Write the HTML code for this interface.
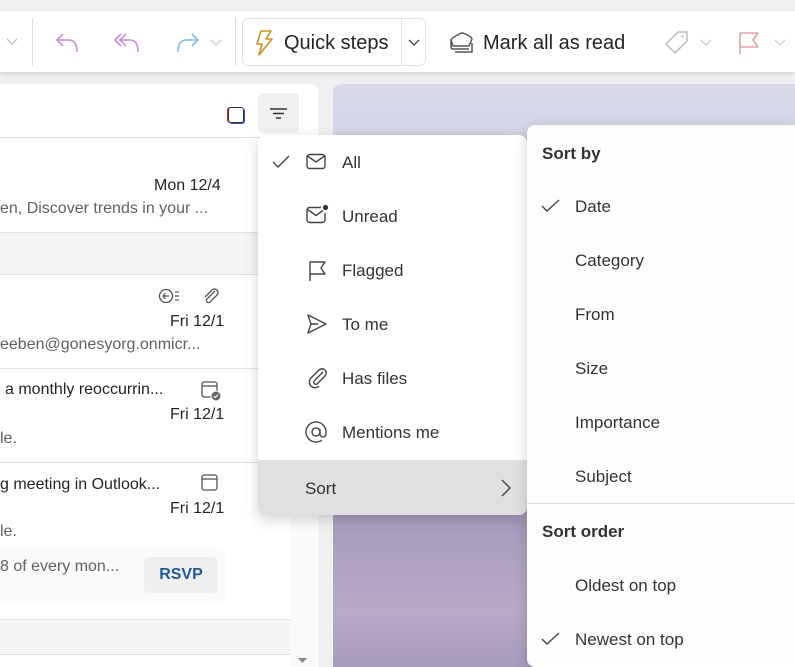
<!DOCTYPE html>
<html><head><meta charset="utf-8"><style>
*{box-sizing:border-box;margin:0;padding:0}
body{width:795px;height:667px;overflow:hidden;background:#f0f0f0;font-family:"Liberation Sans",sans-serif;position:relative;color:#242424}
.abs{position:absolute}
.tb{left:0;top:11px;width:795px;height:61px;background:#fff;box-shadow:0 2px 4px rgba(0,0,0,.12)}
.list{left:0;top:84px;width:318px;height:583px;background:#fff;border-radius:0 8px 0 0}
.row{position:absolute;left:0;width:291px;border-bottom:1px solid #e1e1e1}
.t{position:absolute;white-space:nowrap;font-size:16px}
.g{color:#616161}
.bg{left:333px;top:84px;width:462px;height:583px;border-radius:8px 0 0 0;background:linear-gradient(180deg,#d8dae9 0%,#c8cfe3 20%,#b9b8d2 55%,#a79cbd 75%,#b8a9c8 90%,#a89cbe 100%)}
.m1{left:258px;top:135px;width:269px;height:380px;background:#fff;border-radius:8px;box-shadow:0 4px 14px rgba(0,0,0,.18);overflow:hidden}
.m2{left:527px;top:125px;width:268px;height:542px;background:#fdfdfd;border-radius:8px 0 0 8px;box-shadow:0 4px 14px rgba(0,0,0,.18)}
.mi{position:absolute;font-size:17px;color:#333;white-space:nowrap}
svg{position:absolute;overflow:visible}
</style></head><body>
<div class="abs tb"></div>
<svg style="left:6px;top:38px" width="12" height="8"><path d="M1 1l5 5 5-5" fill="none" stroke="#bbb" stroke-width="1.3"/></svg>
<div class="abs" style="left:32px;top:18px;width:1px;height:48px;background:#ddd"></div>
<svg style="left:55px;top:32px" width="26" height="22"><path d="M8 2L2 8l6 6M2 8h12c5 0 8 4 8 12" fill="none" stroke="#c98ad6" stroke-width="1.6"/></svg>
<svg style="left:114px;top:32px" width="28" height="22"><path d="M7 2L1 8l6 6M12 2L6 8l6 6M6 8h10c5 0 8 4 8 12" fill="none" stroke="#c98ad6" stroke-width="1.6"/></svg>
<svg style="left:174px;top:32px" width="26" height="22"><path d="M18 2l6 6-6 6M24 8H12c-5 0-8 4-8 12" fill="none" stroke="#86b9e8" stroke-width="1.6"/></svg>
<svg style="left:210px;top:39px" width="12" height="8"><path d="M1 1l5 5 5-5" fill="none" stroke="#ccc" stroke-width="1.3"/></svg>
<div class="abs" style="left:235px;top:18px;width:1px;height:48px;background:#ddd"></div>
<div class="abs" style="left:242px;top:18px;width:184px;height:48px;border:1px solid #e0e0e0;border-radius:6px"></div>
<div class="abs" style="left:401px;top:19px;width:1px;height:46px;background:#e0e0e0"></div>
<svg style="left:254px;top:30px" width="20" height="26"><path d="M7 1h10l-5 8h6L5 25l3-11H3z" fill="none" stroke="#c4961a" stroke-width="1.6" stroke-linejoin="round"/></svg>
<div class="t" style="left:284px;top:32px;font-size:20px;color:#242424">Quick steps</div>
<svg style="left:408px;top:39px" width="12" height="8"><path d="M1 1l5 5 5-5" fill="none" stroke="#444" stroke-width="1.3"/></svg>
<svg style="left:449px;top:31px" width="26" height="22"><path d="M2 9c0-2 10-7 11-7 2 0 10 4 10 6l-3 7H4z" fill="none" stroke="#555" stroke-width="1.5" stroke-linejoin="round"/><path d="M2 9v7a2 2 0 0 0 2 2h16" fill="none" stroke="#555" stroke-width="1.5"/><path d="M6 21h17v-9" fill="none" stroke="#555" stroke-width="1.5"/></svg>
<div class="t" style="left:483px;top:32px;font-size:20px;color:#242424">Mark all as read</div>
<svg style="left:664px;top:30px" width="26" height="26"><path d="M14 2h9v9L11 23 2 14z" fill="none" stroke="#bbb" stroke-width="1.5" stroke-linejoin="round"/><circle cx="18.5" cy="6.5" r="1.2" fill="#bbb"/></svg>
<svg style="left:700px;top:39px" width="12" height="8"><path d="M1 1l5 5 5-5" fill="none" stroke="#ccc" stroke-width="1.3"/></svg>
<svg style="left:738px;top:31px" width="22" height="24"><path d="M2 23V2h18l-5 7 5 7H2" fill="none" stroke="#e3a0a8" stroke-width="1.6" stroke-linejoin="round"/></svg>
<svg style="left:774px;top:39px" width="12" height="8"><path d="M1 1l5 5 5-5" fill="none" stroke="#ccc" stroke-width="1.3"/></svg>

<div class="abs list"></div>
<div class="abs" style="left:291px;top:138px;width:27px;height:529px;background:#fafafa"></div>
<div class="abs" style="left:0;top:137px;width:318px;height:1px;background:#e1e1e1"></div>
<div class="abs" style="left:228px;top:107px;width:16px;height:16px;border:1.5px solid #333;border-radius:3px;box-shadow:1px 1px 0 #3050c0,-1px 0 0 #c03030"></div>
<div class="abs" style="left:258px;top:93px;width:41px;height:40px;background:#f0f0f0;border-radius:5px"></div>
<svg style="left:269px;top:108px" width="20" height="12"><path d="M1 1h17M4 5.5h11M7 10h5" stroke="#333" stroke-width="1.4"/></svg>

<div class="row" style="top:138px;height:95px"></div>
<div class="t" style="left:154px;top:177px">Mon 12/4</div>
<div class="t g" style="left:0;top:200px">en, Discover trends in your ...</div>
<div class="abs" style="left:0;top:233px;width:291px;height:42px;background:#f5f5f5;border-bottom:1px solid #e1e1e1"></div>
<div class="row" style="top:276px;height:93px"></div>
<svg style="left:158px;top:288px" width="26" height="16"><circle cx="8" cy="8" r="6.5" fill="none" stroke="#555" stroke-width="1.3"/><path d="M11 8H5m2.5-3L5 8l2.5 3M17 4h4M17 8h4M17 12h4" fill="none" stroke="#555" stroke-width="1.2"/></svg>
<svg style="left:201px;top:287px" width="18" height="18"><path d="M14 4L6 12a2 2 0 0 0 3 3l7-7a3.5 3.5 0 0 0-5-5L4 10" fill="none" stroke="#555" stroke-width="1.3"/></svg>
<div class="t" style="left:170px;top:313px">Fri 12/1</div>
<div class="t g" style="left:0;top:336px">eeben@gonesyorg.onmicr...</div>
<div class="row" style="top:369px;height:94px"></div>
<div class="t" style="left:5px;top:381px">a monthly reoccurrin...</div>
<svg style="left:201px;top:381px" width="22" height="22"><rect x="1" y="1" width="15" height="15" rx="2.5" fill="none" stroke="#555" stroke-width="1.3"/><path d="M1 5h15" stroke="#555" stroke-width="1.3"/><circle cx="15" cy="15" r="5" fill="#666" stroke="#fff" stroke-width="1"/><path d="M12.8 15l1.5 1.5 3-3" fill="none" stroke="#fff" stroke-width="1"/></svg>
<div class="t" style="left:170px;top:406px">Fri 12/1</div>
<div class="t g" style="left:0;top:430px">le.</div>
<div class="row" style="top:463px;height:157px"></div>
<div class="t" style="left:0;top:476px">g meeting in Outlook...</div>
<svg style="left:201px;top:474px" width="18" height="18"><rect x="1" y="1" width="15" height="15" rx="2.5" fill="none" stroke="#555" stroke-width="1.3"/><path d="M1 5h15" stroke="#555" stroke-width="1.3"/></svg>
<div class="t" style="left:170px;top:500px">Fri 12/1</div>
<div class="t g" style="left:0;top:523px">le.</div>
<div class="abs" style="left:0;top:548px;width:225px;height:55px;background:#fafafa;border-radius:0 6px 6px 0"></div>
<div class="t g" style="left:0;top:558px">8 of every mon...</div>
<div class="abs" style="left:144px;top:557px;width:74px;height:36px;background:#efefef;border-radius:5px;color:#1f5a94;font-weight:bold;font-size:16px;text-align:center;line-height:36px">RSVP</div>
<div class="abs" style="left:0;top:620px;width:291px;height:35px;background:#f5f5f5;border-bottom:1px solid #e1e1e1"></div>
<svg style="left:298px;top:658px" width="10" height="6"><path d="M0 0h9L4.5 5z" fill="#888"/></svg>

<div class="abs bg"></div>

<div class="abs m1">
<div class="abs" style="left:0;top:325px;width:269px;height:55px;background:#e0e0e0"></div>
</div>
<svg style="left:272px;top:155px" width="18" height="14"><path d="M1 7l5 5L17 1" fill="none" stroke="#444" stroke-width="1.4"/></svg>
<svg style="left:306px;top:153px" width="22" height="18"><rect x="1" y="1.5" width="18" height="14" rx="2.5" fill="none" stroke="#444" stroke-width="1.4"/><path d="M1.5 3l8.5 6 8.5-6" fill="none" stroke="#444" stroke-width="1.4"/></svg>
<div class="mi" style="left:342px;top:153px">All</div>
<svg style="left:306px;top:204px" width="24" height="20"><path d="M15 3.5H3.5a2.5 2.5 0 0 0-2.5 2.5v10a2.5 2.5 0 0 0 2.5 2.5h13a2.5 2.5 0 0 0 2.5-2.5V9" fill="none" stroke="#444" stroke-width="1.4"/><path d="M1.5 5.5l8.5 6 7-5" fill="none" stroke="#444" stroke-width="1.4"/><circle cx="19.5" cy="3.5" r="2.6" fill="#333"/></svg>
<div class="mi" style="left:342px;top:207px">Unread</div>
<svg style="left:308px;top:260px" width="20" height="22"><path d="M2 21V2h15l-4 6 4 6H2" fill="none" stroke="#444" stroke-width="1.4" stroke-linejoin="round"/></svg>
<div class="mi" style="left:342px;top:261px">Flagged</div>
<svg style="left:306px;top:313px" width="22" height="22"><path d="M2 2l18 9-18 9 3-9zM5 11h7" fill="none" stroke="#444" stroke-width="1.4" stroke-linejoin="round"/></svg>
<div class="mi" style="left:342px;top:315px">To me</div>
<svg style="left:307px;top:367px" width="22" height="22"><path d="M16 5L7 14a2.2 2.2 0 0 0 3 3l8-8a4 4 0 0 0-6-6L4 11a5.5 5.5 0 0 0 8 8" fill="none" stroke="#444" stroke-width="1.4"/></svg>
<div class="mi" style="left:342px;top:369px">Has files</div>
<svg style="left:305px;top:421px" width="22" height="22"><circle cx="11" cy="11" r="4" fill="none" stroke="#444" stroke-width="1.4"/><path d="M15 8v5a3 3 0 0 0 6 0v-2a10 10 0 1 0-4 8" fill="none" stroke="#444" stroke-width="1.4"/></svg>
<div class="mi" style="left:342px;top:423px">Mentions me</div>
<div class="mi" style="left:305px;top:479px">Sort</div>
<svg style="left:500px;top:478px" width="12" height="20"><path d="M2 2l8 8-8 8" fill="none" stroke="#444" stroke-width="1.4"/></svg>

<div class="abs m2"></div>
<div class="mi" style="left:542px;top:144px;font-weight:bold;color:#333">Sort by</div>
<svg style="left:541px;top:199px" width="20" height="14"><path d="M1 7l5 5L18 1" fill="none" stroke="#444" stroke-width="1.4"/></svg>
<div class="mi" style="left:575px;top:197px">Date</div>
<div class="mi" style="left:575px;top:251px">Category</div>
<div class="mi" style="left:575px;top:305px">From</div>
<div class="mi" style="left:575px;top:359px">Size</div>
<div class="mi" style="left:575px;top:413px">Importance</div>
<div class="mi" style="left:575px;top:467px">Subject</div>
<div class="abs" style="left:527px;top:503px;width:268px;height:1px;background:#ddd"></div>
<div class="mi" style="left:542px;top:522px;font-weight:bold;color:#333">Sort order</div>
<div class="mi" style="left:575px;top:576px">Oldest on top</div>
<svg style="left:541px;top:632px" width="20" height="14"><path d="M1 7l5 5L18 1" fill="none" stroke="#444" stroke-width="1.4"/></svg>
<div class="mi" style="left:575px;top:630px">Newest on top</div>
</body></html>
